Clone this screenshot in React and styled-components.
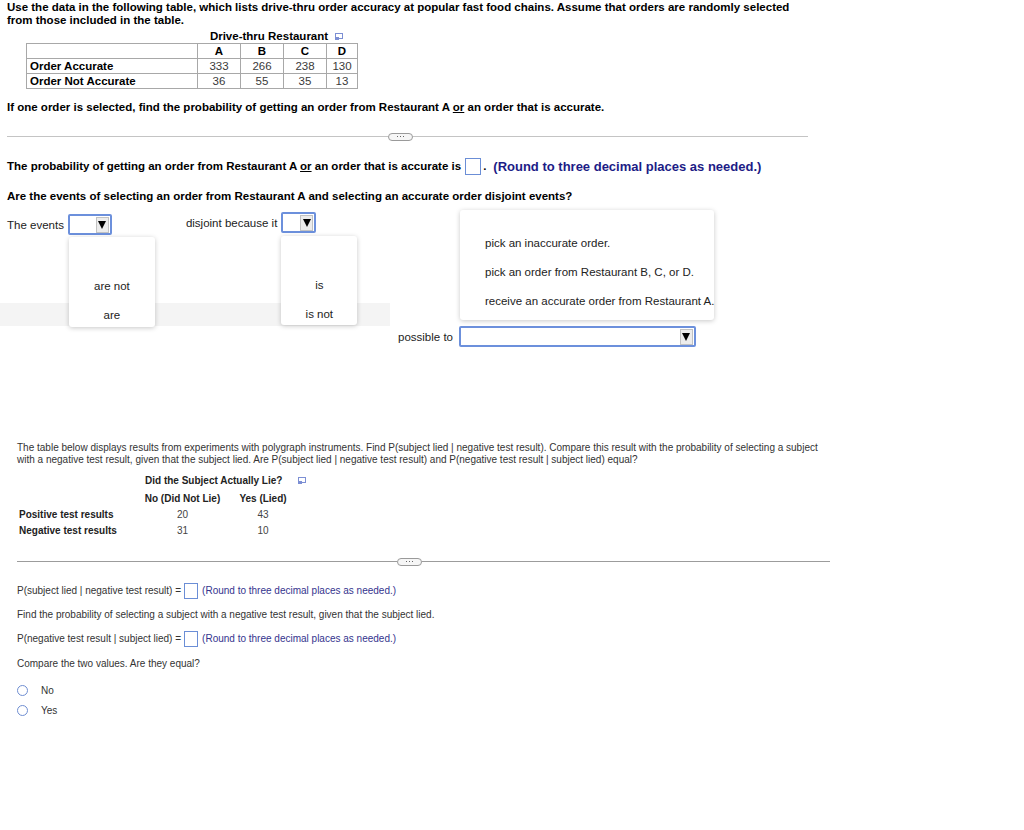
import React from 'react';
import styled, { createGlobalStyle } from 'styled-components';

const GlobalStyle = createGlobalStyle`
  html, body {
    margin: 0;
    padding: 0;
    background: #fff;
  }
  body {
    font-family: "Liberation Sans", Arial, Helvetica, sans-serif;
    color: #000;
  }
`;

const Page = styled.div`
  width: 1024px;
  min-height: 830px;
`;

/* Part 1 : drive-thru table */
const TopSection = styled.section`
  padding: 1px 7px 0;
  font-size: 11.5px;
`;

const BoldText = styled.p`
  margin: ${({ $mt }) => $mt || 0}px 0 0;
  font-weight: bold;
  line-height: 13px;
`;

const Caption = styled.div`
  margin: 2px 0 0 190px;
  width: 160px;
  height: 14px;
  display: flex;
  justify-content: center;
  align-items: center;
  gap: 6px;
  font-weight: bold;
`;

const CopyIcon = () => (
  <svg width="10" height="9" viewBox="0 0 10 9">
    <rect x="1.5" y="1.5" width="7" height="5" fill="#fff" stroke="#7c8fd4" />
    <rect x="1" y="5" width="4" height="3" fill="#7c8fd4" />
  </svg>
);

const DataTable = styled.table`
  margin-left: 19px;
  border-collapse: collapse;
  table-layout: fixed;
  border: 1px solid #7a7a7a;
  font-size: 11.5px;
`;

const Cell = styled.td`
  border: 1px solid #a8a8a8;
  height: 14px;
  padding: 0 3px;
  line-height: 14px;
  text-align: ${({ $left }) => ($left ? 'left' : 'center')};
  font-weight: ${({ $bold }) => ($bold ? 'bold' : 'normal')};
  color: ${({ $bold }) => ($bold ? '#000' : '#3a3a3a')};
`;

const Divider = styled.div`
  display: flex;
  align-items: center;
  width: ${({ $w }) => $w}px;
  height: 9px;
  margin-top: ${({ $mt }) => $mt}px;
`;

const DividerLine = styled.div`
  height: 1px;
  background: ${({ $color }) => $color};
  flex: ${({ $fixed }) => ($fixed ? `0 0 ${$fixed}px` : '1')};
`;

const Pill = styled.div`
  width: 23px;
  height: 6px;
  border: 1px solid #9a9a9a;
  border-radius: 5px;
  background: #f6f6f6;
  display: flex;
  justify-content: center;
  align-items: center;
  gap: 2px;
`;

const Dot = styled.span`
  width: 1px;
  height: 1px;
  background: #666;
`;

const SectionDivider = ({ left, width, color, mt }) => (
  <Divider $mt={mt} $w={width}>
    <DividerLine $fixed={left} $color={color} />
    <Pill>
      <Dot />
      <Dot />
      <Dot />
    </Pill>
    <DividerLine $color={color} />
  </Divider>
);

const AnswerLine = styled.div`
  display: flex;
  align-items: center;
  height: 18px;
  margin-top: ${({ $mt }) => $mt}px;
  font-weight: bold;
`;

const AnswerBox = styled.span`
  display: inline-block;
  box-sizing: border-box;
  width: ${({ $w }) => $w}px;
  height: ${({ $h }) => $h}px;
  border: 1px solid #6b8ed6;
  margin: 0 ${({ $mr }) => $mr || 0}px 0 ${({ $ml }) => $ml}px;
  background: #fff;
`;

const Hint = styled.span`
  margin-left: ${({ $ml }) => $ml}px;
  font-size: ${({ $size }) => $size}px;
  font-weight: ${({ $bold }) => ($bold ? 'bold' : 'normal')};
  color: ${({ $bold }) => ($bold ? '#1c1c86' : '#34348e')};
`;

const SelectRow = styled.div`
  display: flex;
  align-items: flex-start;
  height: 23px;
  margin-top: 9.5px;
`;

const SelectGroup = styled.div`
  display: flex;
  align-items: center;
  gap: 4px;
  margin: ${({ $down }) => ($down ? 2 : 0)}px 0 0 ${({ $ml }) => $ml || 0}px;
  color: #222;
`;

const SelectBox = styled.div`
  position: relative;
  box-sizing: border-box;
  width: ${({ $w }) => $w}px;
  height: 21px;
  border: 2px solid #6c90dc;
  border-radius: 2px;
  background: #fff;
  display: flex;
  justify-content: flex-end;
  align-items: center;
  padding-right: 1px;
`;

const SelectButton = styled.div`
  width: 11px;
  height: 14px;
  background: #ececec;
  border: 1px solid #c2c2c2;
  display: flex;
  align-items: center;
  justify-content: center;
`;

const Arrow = styled.span`
  width: 0;
  height: 0;
  border-left: 4px solid transparent;
  border-right: 4px solid transparent;
  border-top: 8px solid #000;
`;

const Menu = styled.div`
  position: absolute;
  z-index: 2;
  left: ${({ $left }) => $left}px;
  width: ${({ $w }) => $w}px;
  height: ${({ $h }) => $h}px;
  ${({ $up, $gap }) => ($up ? `bottom: calc(100% + ${$gap}px);` : `top: calc(100% + ${$gap}px);`)}
  box-sizing: border-box;
  background: #fff;
  border-radius: 3px;
  box-shadow: 0 1px 5px rgba(0, 0, 0, 0.22);
  overflow: hidden;
  display: flex;
  flex-direction: column;
  justify-content: ${({ $up }) => ($up ? 'flex-end' : 'flex-start')};
  padding: ${({ $up }) => ($up ? '0 0 4.5px' : '5.5px 0 0')};
`;

const MenuItem = styled.div`
  flex: 0 0 29px;
  line-height: 29px;
  font-size: 11.5px;
  color: #222;
  white-space: nowrap;
  text-align: ${({ $left }) => ($left ? 'left' : 'center')};
  padding-left: ${({ $left }) => ($left ? 25 : 0)}px;
`;

const Select = ({ width, menu }) => (
  <SelectBox $w={width}>
    <SelectButton>
      <Arrow />
    </SelectButton>
    {menu}
  </SelectBox>
);

const MenuArea = styled.div`
  height: 91px;
  display: flex;
  flex-direction: column;
  justify-content: flex-end;
`;

const ShadeBand = styled.div`
  margin-left: -7px;
  width: 390px;
  height: 23px;
  background: #f4f4f4;
`;

const PossibleRow = styled.div`
  display: flex;
  align-items: center;
  gap: 6px;
  padding-left: 391px;
  height: 21px;
  color: #222;
`;

/* Part 2 : polygraph table */
const BottomSection = styled.section`
  margin-top: 95px;
  padding: 0 0 40px 17px;
  font-size: 10px;
  color: #333;
`;

const Paragraph = styled.p`
  margin: ${({ $mt }) => $mt || 0}px 0 0;
  max-width: 815px;
  line-height: 12px;
`;

const LieCaption = styled.div`
  margin: 8px 0 0 128px;
  display: flex;
  align-items: center;
  gap: 15px;
  height: 12px;
  font-weight: bold;
  color: #222;
`;

const LieTable = styled.div`
  margin-top: 4px;
  display: grid;
  grid-template-columns: 120px 91px 70px;
  grid-auto-rows: 16px;
  align-items: center;
`;

const LieCell = styled.div`
  padding-left: ${({ $label }) => ($label ? 2 : 0)}px;
  text-align: ${({ $label }) => ($label ? 'left' : 'center')};
  font-weight: ${({ $bold }) => ($bold ? 'bold' : 'normal')};
  color: ${({ $bold }) => ($bold ? '#222' : '#444')};
  white-space: nowrap;
`;

const SmallAnswerLine = styled.div`
  display: flex;
  align-items: center;
  height: 17px;
  margin-top: ${({ $mt }) => $mt}px;
`;

const RadioRow = styled.label`
  display: flex;
  align-items: center;
  gap: 13px;
  height: 16px;
  margin-top: ${({ $mt }) => $mt}px;
`;

const RadioCircle = styled.span`
  box-sizing: border-box;
  width: 11px;
  height: 11px;
  border: 1.5px solid #6f8ed2;
  border-radius: 50%;
  background: #fff;
`;

const App = () => (
  <Page>
    <GlobalStyle />
    <TopSection>
      <BoldText>
        Use the data in the following table, which lists drive-thru order accuracy at popular fast food chains. Assume that orders are randomly selected
        <br />
        from those included in the table.
      </BoldText>
      <Caption>
        <span>Drive-thru Restaurant</span>
        <CopyIcon />
      </Caption>
      <DataTable>
        <colgroup>
          <col style={{ width: 171 }} />
          <col style={{ width: 43 }} />
          <col style={{ width: 43 }} />
          <col style={{ width: 43 }} />
          <col style={{ width: 31 }} />
        </colgroup>
        <tbody>
          <tr>
            <Cell />
            <Cell $bold>A</Cell>
            <Cell $bold>B</Cell>
            <Cell $bold>C</Cell>
            <Cell $bold>D</Cell>
          </tr>
          <tr>
            <Cell $left $bold>Order Accurate</Cell>
            <Cell>333</Cell>
            <Cell>266</Cell>
            <Cell>238</Cell>
            <Cell>130</Cell>
          </tr>
          <tr>
            <Cell $left $bold>Order Not Accurate</Cell>
            <Cell>36</Cell>
            <Cell>55</Cell>
            <Cell>35</Cell>
            <Cell>13</Cell>
          </tr>
        </tbody>
      </DataTable>
      <BoldText $mt={12}>
        If one order is selected, find the probability of getting an order from Restaurant A <u>or</u> an order that is accurate.
      </BoldText>

      <SectionDivider left={381} width={801} color="#c4c4c4" mt={18} />

      <AnswerLine $mt={16}>
        <span>The probability of getting an order from Restaurant A <u>or</u> an order that is accurate is</span>
        <AnswerBox $w={16} $h={17} $ml={4} $mr={2} />
        <span>.</span>
        <Hint $ml={7} $size={13} $bold>(Round to three decimal places as needed.)</Hint>
      </AnswerLine>
      <BoldText $mt={14.5}>
        Are the events of selecting an order from Restaurant A and selecting an accurate order disjoint events?
      </BoldText>

      <SelectRow>
        <SelectGroup $down>
          <span>The events</span>
          <Select
            width={44}
            menu={
              <Menu $left={-1} $w={86} $h={90} $gap={4}>
                <MenuItem>&nbsp;</MenuItem>
                <MenuItem>are not</MenuItem>
                <MenuItem>are</MenuItem>
              </Menu>
            }
          />
        </SelectGroup>
        <SelectGroup $ml={74}>
          <span>disjoint because it</span>
          <Select
            width={35}
            menu={
              <Menu $left={-2} $w={76} $h={89} $gap={5}>
                <MenuItem>&nbsp;</MenuItem>
                <MenuItem>is</MenuItem>
                <MenuItem>is not</MenuItem>
              </Menu>
            }
          />
        </SelectGroup>
      </SelectRow>
      <MenuArea>
        <ShadeBand />
      </MenuArea>
      <PossibleRow>
        <span>possible to</span>
        <Select
          width={237}
          menu={
            <Menu $up $left={-1} $w={254} $h={110} $gap={8}>
              <MenuItem $left>&nbsp;</MenuItem>
              <MenuItem $left>pick an inaccurate order.</MenuItem>
              <MenuItem $left>pick an order from Restaurant B, C, or D.</MenuItem>
              <MenuItem $left>receive an accurate order from Restaurant A.</MenuItem>
            </Menu>
          }
        />
      </PossibleRow>
    </TopSection>

    <BottomSection>
      <Paragraph>
        The table below displays results from experiments with polygraph instruments. Find P(subject lied | negative test result). Compare this result with the probability of selecting a subject with a negative test result, given that the subject lied. Are P(subject lied | negative test result) and P(negative test result | subject lied) equal?
      </Paragraph>
      <LieCaption>
        <span>Did the Subject Actually Lie?</span>
        <CopyIcon />
      </LieCaption>
      <LieTable>
        <LieCell />
        <LieCell $bold>No (Did Not Lie)</LieCell>
        <LieCell $bold>Yes (Lied)</LieCell>
        <LieCell $label $bold>Positive test results</LieCell>
        <LieCell>20</LieCell>
        <LieCell>43</LieCell>
        <LieCell $label $bold>Negative test results</LieCell>
        <LieCell>31</LieCell>
        <LieCell>10</LieCell>
      </LieTable>

      <SectionDivider left={380} width={813} color="#9c9c9c" mt={19} />

      <SmallAnswerLine $mt={16}>
        <span>P(subject lied | negative test result) =</span>
        <AnswerBox $w={14} $h={16} $ml={3} />
        <Hint $ml={4} $size={10}>(Round to three decimal places as needed.)</Hint>
      </SmallAnswerLine>
      <Paragraph $mt={9.5}>
        Find the probability of selecting a subject with a negative test result, given that the subject lied.
      </Paragraph>
      <SmallAnswerLine $mt={9.5}>
        <span>P(negative test result | subject lied) =</span>
        <AnswerBox $w={14} $h={16} $ml={3} />
        <Hint $ml={4} $size={10}>(Round to three decimal places as needed.)</Hint>
      </SmallAnswerLine>
      <Paragraph $mt={10.5}>Compare the two values. Are they equal?</Paragraph>
      <RadioRow $mt={13}>
        <RadioCircle />
        <span>No</span>
      </RadioRow>
      <RadioRow $mt={4}>
        <RadioCircle />
        <span>Yes</span>
      </RadioRow>
    </BottomSection>
  </Page>
);

export default App;
